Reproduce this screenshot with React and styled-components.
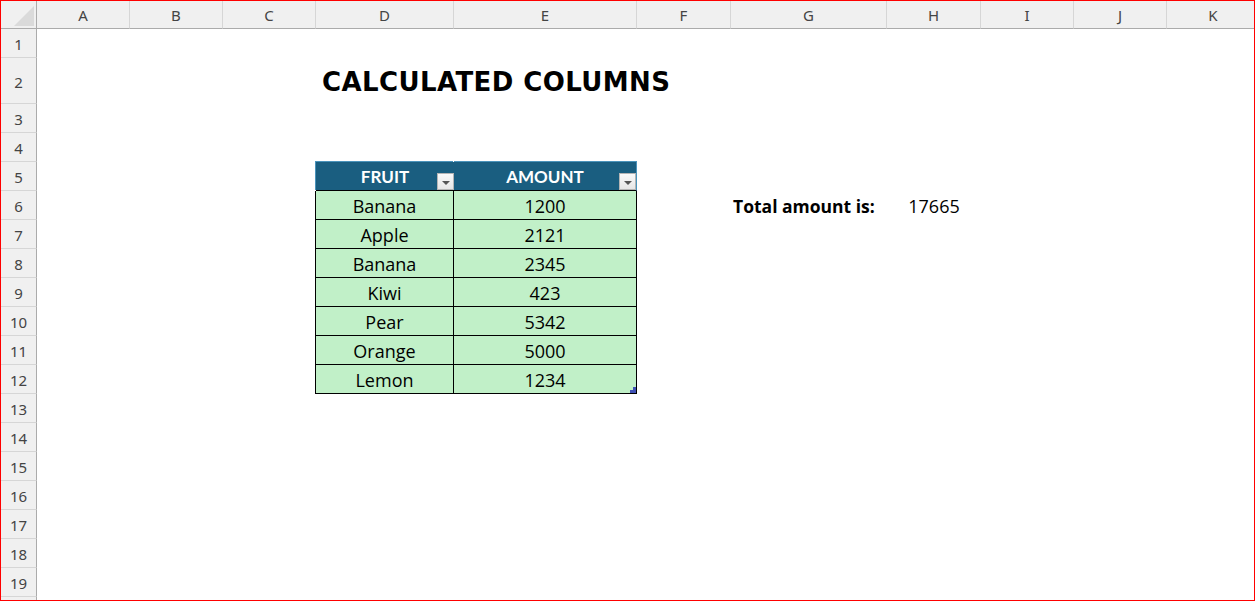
import React from "react";
import styled, { createGlobalStyle } from "styled-components";

const GlobalStyle = createGlobalStyle`
  html, body {
    margin: 0;
    padding: 0;
    background: #ffffff;
  }
`;

const columns = [
  { name: "A", width: 93 },
  { name: "B", width: 93 },
  { name: "C", width: 93 },
  { name: "D", width: 138 },
  { name: "E", width: 183 },
  { name: "F", width: 94 },
  { name: "G", width: 156 },
  { name: "H", width: 94 },
  { name: "I", width: 93 },
  { name: "J", width: 93 },
  { name: "K", width: 93 },
];

// row 20 is only a sliver at the bottom edge
const rowHeights = [29, 46, ...Array(18).fill(29)];

const fruits = [
  ["Banana", 1200],
  ["Apple", 2121],
  ["Banana", 2345],
  ["Kiwi", 423],
  ["Pear", 5342],
  ["Orange", 5000],
  ["Lemon", 1234],
];

function App() {
  const total = fruits.reduce((s, f) => s + f[1], 0);
  return (
    <>
      <GlobalStyle />
      <Frame>
        <Sheet>
          <Corner>
            <CornerMark />
          </Corner>
          {columns.map((c, i) => (
            <ColHeader key={c.name} $col={i + 2}>
              {c.name}
            </ColHeader>
          ))}
          {rowHeights.map((h, i) => (
            <RowHeader key={i} $row={i + 2}>
              {i < 19 ? i + 1 : ""}
            </RowHeader>
          ))}

          <Title $row={3} $col={5}>
            CALCULATED COLUMNS
          </Title>

          <TableHead $row={6} $col={5}>
            FRUIT
            <FilterButton>
              <Arrow />
            </FilterButton>
          </TableHead>
          <TableHead $row={6} $col={6} $last>
            AMOUNT
            <FilterButton>
              <Arrow />
            </FilterButton>
          </TableHead>

          {fruits.map(([name, amount], i) => (
            <React.Fragment key={i}>
              <TableCell $row={7 + i} $col={5} $first>
                {name}
              </TableCell>
              <TableCell $row={7 + i} $col={6}>
                {amount}
                {i === fruits.length - 1 && <ResizeHandle />}
              </TableCell>
            </React.Fragment>
          ))}

          <Label $row={7} $col={8}>
            Total amount is:
          </Label>
          <Value $row={7} $col={9}>
            {total}
          </Value>
        </Sheet>
      </Frame>
    </>
  );
}

const Frame = styled.div`
  box-sizing: border-box;
  width: 1255px;
  height: 601px;
  border: 1px solid #ff0000;
  overflow: hidden;
  background: #ffffff;
`;

const Sheet = styled.div`
  display: grid;
  grid-template-columns: 36px ${columns.map((c) => c.width + "px").join(" ")};
  grid-template-rows: 28px ${rowHeights.map((h) => h + "px").join(" ")};
  font-family: "Open Sans", "Liberation Sans", sans-serif;
`;

const HeaderBase = styled.div`
  box-sizing: border-box;
  background: #f0f0f0;
  color: #444444;
  font-family: "Noto Sans", "Liberation Sans", sans-serif;
  font-size: 15px;
  display: flex;
  align-items: center;
  justify-content: center;
`;

const Corner = styled(HeaderBase)`
  grid-row: 1;
  grid-column: 1;
  position: relative;
  border-right: 1px solid #ababab;
  border-bottom: 1px solid #ababab;
`;

const CornerMark = styled.span`
  position: absolute;
  right: 2px;
  bottom: 2px;
  width: 20px;
  height: 20px;
  background: #dadada;
  clip-path: polygon(100% 0, 100% 100%, 0 100%);
`;

const ColHeader = styled(HeaderBase)`
  grid-row: 1;
  grid-column: ${(p) => p.$col};
  border-right: 1px solid #d6d6d6;
  border-bottom: 1px solid #ababab;
  padding-top: 1px;
`;

const RowHeader = styled(HeaderBase)`
  grid-column: 1;
  grid-row: ${(p) => p.$row};
  border-right: 1px solid #ababab;
  border-bottom: 1px solid #d6d6d6;
  padding-top: 2px;
`;

const Placed = styled.div`
  box-sizing: border-box;
  grid-row: ${(p) => p.$row};
  grid-column: ${(p) => p.$col};
  color: #000000;
  white-space: nowrap;
`;

const Title = styled(Placed)`
  display: flex;
  align-items: flex-end;
  padding: 0 0 7px 6px;
  font-family: "DejaVu Sans", "Liberation Sans", sans-serif;
  font-size: 26px;
  font-weight: 700;
  letter-spacing: 0.4px;
  overflow: visible;
`;

const TableHead = styled(Placed)`
  position: relative;
  display: flex;
  align-items: center;
  justify-content: center;
  background: #1a5e80;
  color: #ffffff;
  font-family: "Lato", "Liberation Sans", sans-serif;
  font-size: 17px;
  font-weight: 700;
  border-bottom: 1px solid #000000;
  border-right: ${(p) => (p.$last ? "1px solid #4a93bb" : "none")};
  box-shadow: ${(p) => (p.$last ? "0 -1px 0 #4a93bb" : "-1px -1px 0 #4a93bb")};
  padding-top: 1px;
`;

const FilterButton = styled.span`
  position: absolute;
  right: 0;
  bottom: 0;
  box-sizing: border-box;
  width: 17px;
  height: 17px;
  background: linear-gradient(#fafafa, #e6e6e6);
  border: 1px solid #b5b5b5;
  display: flex;
  align-items: center;
  justify-content: center;
`;

const Arrow = styled.span`
  width: 0;
  height: 0;
  border-left: 4px solid transparent;
  border-right: 4px solid transparent;
  border-top: 4px solid #555555;
  margin-top: 2px;
`;

const TableCell = styled(Placed)`
  position: relative;
  display: flex;
  align-items: center;
  justify-content: center;
  background: #c1f0c8;
  font-size: 18px;
  border-right: 1px solid #000000;
  border-bottom: 1px solid #000000;
  box-shadow: ${(p) => (p.$first ? "-1px 0 0 #000000" : "none")};
  padding-top: 1px;
`;

const ResizeHandle = styled.span`
  position: absolute;
  right: 0;
  bottom: 0;
  width: 6px;
  height: 6px;
  background: #3f51b5;
  clip-path: polygon(100% 0, 100% 100%, 0 100%, 0 50%, 50% 50%, 50% 0);
`;

const Label = styled(Placed)`
  display: flex;
  align-items: center;
  padding: 1px 0 0 2px;
  font-size: 17.5px;
  font-weight: 700;
`;

const Value = styled(Placed)`
  display: flex;
  align-items: center;
  justify-content: center;
  padding-top: 1px;
  font-size: 18px;
`;

export default App;
